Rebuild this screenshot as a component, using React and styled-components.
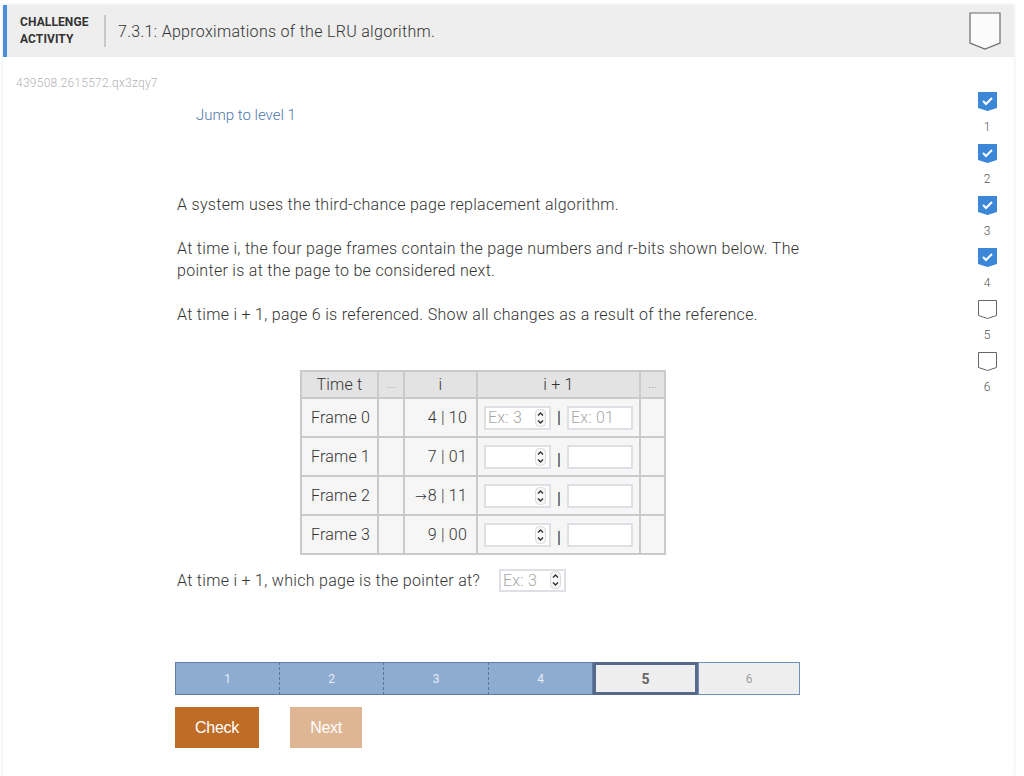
import React from 'react';
import styled, { createGlobalStyle } from 'styled-components';

const GlobalStyle = createGlobalStyle`
  html, body {
    margin: 0;
    padding: 0;
    background: #ffffff;
    font-family: Roboto, "Liberation Sans", Arial, sans-serif;
    color: #333333;
  }
`;

const Page = styled.div`
  padding: 5px 10px 0 3px;
  height: 771px;
`;

const Card = styled.div`
  height: 100%;
  background: #ffffff;
  box-shadow: 0 0 3px rgba(0, 0, 0, 0.12);
`;

const Header = styled.div`
  height: 52px;
  background: #eeeeee;
  border-left: 4px solid #4a8fd8;
  display: flex;
  align-items: center;
  padding: 0 13px 0 13px;
`;

const Kind = styled.div`
  font-size: 12px;
  font-weight: 700;
  line-height: 17px;
  color: #333333;
  width: 70px;
  letter-spacing: 0.1px;
`;

const Divider = styled.div`
  width: 2px;
  height: 32px;
  background: #c8c8c8;
  margin: 0 12px 0 14px;
`;

const Title = styled.div`
  font-size: 16px;
  font-weight: 300;
  letter-spacing: 0.3px;
  color: #333333;
  flex: 1;
`;

const Body = styled.div`
  display: flex;
`;

const Main = styled.div`
  flex: 1;
  padding: 19px 0 0 13px;
`;

const ActivityId = styled.div`
  font-size: 12px;
  font-weight: 300;
  letter-spacing: 0.25px;
  line-height: 14px;
  color: #b4b4b4;
`;

const Content = styled.div`
  width: 625px;
  margin-left: 159px;
`;

const JumpLink = styled.a`
  display: block;
  margin: 15px 0 0 21px;
  font-size: 15px;
  font-weight: 300;
  line-height: 20px;
  color: #4d77ad;
  text-decoration: none;
`;

const Paragraph = styled.p`
  margin: ${(p) => p.$top}px 0 0 2px;
  font-size: 16px;
  font-weight: 300;
  letter-spacing: 0.3px;
  line-height: 22px;
  color: #333333;
`;

const Table = styled.table`
  margin: 44px 0 0 125px;
  border-collapse: collapse;
  table-layout: fixed;
  border: 2px solid #cacaca;
  font-size: 16px;
  font-weight: 300;
  letter-spacing: 0.2px;
`;

const HeadCell = styled.th`
  height: 25px;
  padding: 0;
  background: #e3e3e3;
  border: 2px solid #cacaca;
  font-weight: 300;
  font-size: ${(p) => (p.$dim ? '11px' : '16px')};
  color: ${(p) => (p.$dim ? '#8a8a8a' : '#333333')};
  text-align: center;
`;

const Cell = styled.td`
  height: 37px;
  padding: 0 ${(p) => (p.$align === 'right' ? '9px' : '0')} 0 ${(p) => (p.$align === 'left' ? '9px' : '0')};
  background: #f6f6f6;
  border: 2px solid #cacaca;
  text-align: ${(p) => p.$align || 'left'};
  color: #333333;
  white-space: nowrap;
`;

const Arrow = styled.span`
  font-family: "DejaVu Sans", sans-serif;
  font-size: 14px;
  margin-right: 1px;
`;

const PairCell = styled.div`
  display: flex;
  align-items: center;
  padding-left: 6px;
`;

const Bar = styled.span`
  width: 16px;
  text-align: center;
  color: #333333;
  font-weight: 400;
  margin-top: ${(p) => (p.$low ? '6px' : '0')};
`;

const Field = styled.div`
  display: flex;
  align-items: center;
  box-sizing: border-box;
  width: ${(p) => p.$w}px;
  height: ${(p) => p.$h || 24}px;
  border: 2px solid #dde1e5;
  background: #ffffff;
  padding: 0 3px 0 2px;
`;

const FieldInput = styled.input`
  flex: 1;
  min-width: 0;
  border: none;
  outline: none;
  padding: 0;
  background: transparent;
  font-family: inherit;
  font-size: 16px;
  font-weight: 300;
  letter-spacing: 0.2px;
  color: #333333;
  &::placeholder {
    color: #a8a8a8;
  }
`;

const Spin = styled.svg`
  flex: none;
  width: 11px;
  height: 18px;
`;

const Spinner = () => (
  <Spin viewBox="0 0 11 18">
    <rect x="0.5" y="0.5" width="10" height="17" rx="4" fill="#f7f7f7" stroke="#dadada" />
    <path d="M3 6.5 L5.5 4 L8 6.5" fill="none" stroke="#333" strokeWidth="1.4" />
    <path d="M3 11.5 L5.5 14 L8 11.5" fill="none" stroke="#333" strokeWidth="1.4" />
  </Spin>
);

const NumberField = ({ placeholder, width = 67, height }) => (
  <Field $w={width} $h={height}>
    <FieldInput type="text" placeholder={placeholder} />
    <Spinner />
  </Field>
);

const TextField = ({ placeholder }) => (
  <Field $w={66}>
    <FieldInput type="text" placeholder={placeholder} />
  </Field>
);

const Question = styled.div`
  margin: 13px 0 0 2px;
  display: flex;
  align-items: center;
  height: 24px;
  font-size: 16px;
  font-weight: 300;
  letter-spacing: 0.3px;
  gap: 19px;
`;

const Progress = styled.div`
  margin-top: 70px;
  display: flex;
  height: 33px;
  width: 625px;
`;

const Segment = styled.div`
  flex: none;
  width: ${(p) => p.$w}px;
  box-sizing: border-box;
  display: flex;
  align-items: center;
  justify-content: center;
  font-size: ${(p) => (p.$state === 'current' ? '14px' : '12px')};
  font-weight: ${(p) => (p.$state === 'current' ? 700 : 400)};
  color: ${(p) => (p.$state === 'done' ? '#e6edf6' : p.$state === 'current' ? '#666666' : '#a0a0a0')};
  background: ${(p) => (p.$state === 'done' ? '#8eabd0' : '#eeeeee')};
  border: ${(p) =>
    p.$state === 'current' ? '3px solid #56698a' : p.$state === 'todo' ? '1px solid #6f8fbe' : '1px solid #5d7ca8'};
  border-right: ${(p) => (p.$dashed ? '1px dashed #56749e' : undefined)};
  border-left: ${(p) => (p.$state === 'done' && !p.$first ? 'none' : undefined)};
`;

const Buttons = styled.div`
  margin-top: 12px;
  display: flex;
  gap: 31px;
`;

const Button = styled.button`
  height: 41px;
  width: ${(p) => p.$w}px;
  border: none;
  font-family: "Liberation Sans", Arial, sans-serif;
  font-size: 16px;
  color: #ffffff;
  background: ${(p) => (p.$muted ? '#dfb694' : '#bf6c26')};
  cursor: pointer;
  letter-spacing: -0.3px;
`;

const Levels = styled.div`
  width: 54px;
  padding: 35px 0 0 0;
  display: flex;
  flex-direction: column;
  align-items: center;
`;

const Level = styled.div`
  display: flex;
  flex-direction: column;
  align-items: center;
  margin-bottom: 10px;
`;

const LevelNum = styled.div`
  margin-top: 9px;
  font-size: 12px;
  font-weight: 300;
  line-height: 14px;
  color: #555555;
`;

const LevelIcon = ({ done }) => (
  <svg width="19" height="19" viewBox="0 0 19 19">
    {done ? (
      <>
        <path d="M0 0 H19 V16 L9.5 19 L0 16 Z" fill="#3d87d8" />
        <path d="M5 9 L8 12 L14 6" fill="none" stroke="#fff" strokeWidth="2" />
      </>
    ) : (
      <path d="M0.5 0.5 H18.5 V15.5 L9.5 18.5 L0.5 15.5 Z" fill="#fff" stroke="#666" strokeWidth="1" />
    )}
  </svg>
);

const Badge = () => (
  <svg width="32" height="38" viewBox="0 0 32 38">
    <path d="M1 1 H31 V31 L16 37 L1 31 Z" fill="#fbfbfb" stroke="#6a6a6a" strokeWidth="1.2" />
  </svg>
);

const rows = [
  { name: 'Frame 0', value: '4 | 10', hint: true },
  { name: 'Frame 1', value: '7 | 01' },
  { name: 'Frame 2', value: '8 | 11', pointer: true },
  { name: 'Frame 3', value: '9 | 00' },
];

const segments = [
  { state: 'done', w: 105 },
  { state: 'done', w: 104 },
  { state: 'done', w: 105 },
  { state: 'done', w: 104 },
  { state: 'current', w: 105 },
  { state: 'todo', w: 102 },
];

export default function App() {
  return (
    <Page>
      <GlobalStyle />
      <Card>
        <Header>
          <Kind>
            CHALLENGE
            <br />
            ACTIVITY
          </Kind>
          <Divider />
          <Title>7.3.1: Approximations of the LRU algorithm.</Title>
          <Badge />
        </Header>
        <Body>
          <Main>
            <ActivityId>439508.2615572.qx3zqy7</ActivityId>
            <Content>
              <JumpLink href="#">Jump to level 1</JumpLink>
              <Paragraph $top={69}>A system uses the third-chance page replacement algorithm.</Paragraph>
              <Paragraph $top={22}>
                At time i, the four page frames contain the page numbers and r-bits shown below. The pointer is at
                the page to be considered next.
              </Paragraph>
              <Paragraph $top={22}>
                At time i + 1, page 6 is referenced. Show all changes as a result of the reference.
              </Paragraph>
              <Table>
                <colgroup>
                  <col style={{ width: 77 }} />
                  <col style={{ width: 26 }} />
                  <col style={{ width: 73 }} />
                  <col style={{ width: 163 }} />
                  <col style={{ width: 25 }} />
                </colgroup>
                <thead>
                  <tr>
                    <HeadCell>Time t</HeadCell>
                    <HeadCell $dim>...</HeadCell>
                    <HeadCell>i</HeadCell>
                    <HeadCell>i + 1</HeadCell>
                    <HeadCell $dim>...</HeadCell>
                  </tr>
                </thead>
                <tbody>
                  {rows.map((r) => (
                    <tr key={r.name}>
                      <Cell $align="left">{r.name}</Cell>
                      <Cell />
                      <Cell $align="right">
                        {r.pointer && <Arrow>→</Arrow>}
                        {r.value}
                      </Cell>
                      <Cell>
                        <PairCell>
                          <NumberField placeholder={r.hint ? 'Ex: 3' : ''} />
                          <Bar $low={!r.hint}>|</Bar>
                          <TextField placeholder={r.hint ? 'Ex: 01' : ''} />
                        </PairCell>
                      </Cell>
                      <Cell />
                    </tr>
                  ))}
                </tbody>
              </Table>
              <Question>
                At time i + 1, which page is the pointer at?
                <NumberField placeholder="Ex: 3" width={67} height={23} />
              </Question>
              <Progress>
                {segments.map((s, i) => (
                  <Segment key={i} $w={s.w} $state={s.state} $first={i === 0} $dashed={i < 3}>
                    {i + 1}
                  </Segment>
                ))}
              </Progress>
              <Buttons>
                <Button $w={84}>Check</Button>
                <Button $w={72} $muted>
                  Next
                </Button>
              </Buttons>
            </Content>
          </Main>
          <Levels>
            {[1, 2, 3, 4, 5, 6].map((n) => (
              <Level key={n}>
                <LevelIcon done={n <= 4} />
                <LevelNum>{n}</LevelNum>
              </Level>
            ))}
          </Levels>
        </Body>
      </Card>
    </Page>
  );
}
